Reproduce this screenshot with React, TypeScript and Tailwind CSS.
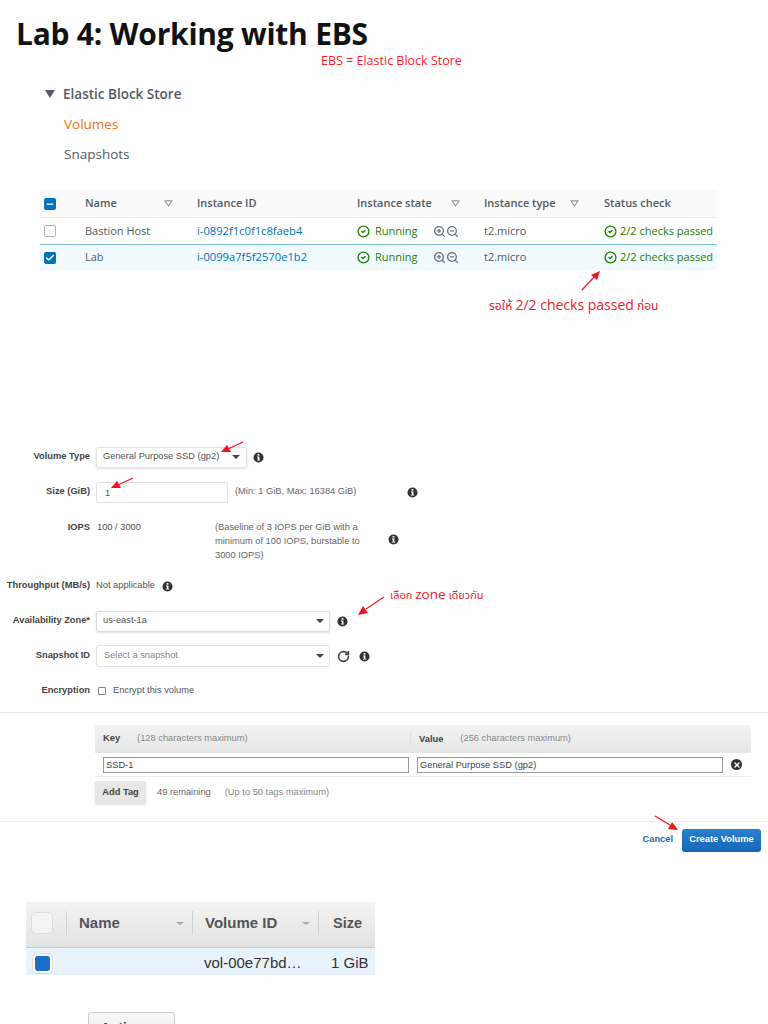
import { CircleCheck, RotateCw, ZoomIn, ZoomOut, Check, Minus, X } from "lucide-react";

function InfoIcon({ className }: { className: string }) {
    return (
        <svg viewBox="0 0 12 12" className={className}>
            <circle cx="6" cy="6" r="5.5" fill="#333" />
            <rect x="5" y="2.3" width="2" height="1.7" fill="#fff" />
            <path d="M4.4 5h2.6v3.4h.8v1H4.4v-1h.8V6h-.8z" fill="#fff" />
        </svg>
    );
}

function Caret() {
    return <span className="w-0 h-0 border-x-[4px] border-x-transparent border-t-[4px] border-t-[#444]" />;
}

function SortMark() {
    return (
        <svg viewBox="0 0 10 8" className="w-[9px] h-[7px]">
            <path d="M1 1h8L5 7z" fill="none" stroke="#8d99a3" strokeWidth="1.2" />
        </svg>
    );
}

function FormRow({ label, className, children }: { label: string; className: string; children: React.ReactNode }) {
    return (
        <div className={`flex items-center ${className}`}>
            <span className="w-[90px] text-right font-bold text-[#444] shrink-0 whitespace-nowrap">{label}</span>
            <div className="ml-[6px] flex items-center">{children}</div>
        </div>
    );
}

const instances = [
    { name: "Bastion Host", id: "i-0892f1c0f1c8faeb4", selected: false },
    { name: "Lab", id: "i-0099a7f5f2570e1b2", selected: true },
];

const thai = "font-['Noto_Sans','Noto_Sans_Thai','Liberation_Sans',sans-serif]";

export default function App() {
    return (
        <div className="relative h-[1024px] w-[768px] overflow-hidden bg-white font-['Liberation_Sans',sans-serif]">
            {/* Title slide part */}
            <h1 className="pt-[12px] pl-[16px] h-[52px] text-[30px] leading-[44px] font-bold text-[#111] font-['Open_Sans',sans-serif] tracking-[-0.25px] whitespace-nowrap">
                Lab 4: Working with EBS
            </h1>
            <p className="pl-[321px] h-[20px] text-[12.5px] leading-[18px] text-[#ff1a2a] font-['Open_Sans',sans-serif]">
                EBS = Elastic Block Store
            </p>

            <div className="pl-[45px] pt-[12px] h-[118px] font-['Open_Sans',sans-serif] text-[13.5px] text-[#545b64]">
                <div className="flex items-center h-[20px] font-semibold">
                    <span className="w-0 h-0 mr-[8px] border-x-[5px] border-x-transparent border-t-[8px] border-t-[#545b64]" />
                    Elastic Block Store
                </div>
                <div className="mt-[10px] pl-[19px] h-[20px] text-[#ec7211]">Volumes</div>
                <div className="mt-[10px] pl-[19px] h-[20px]">Snapshots</div>
            </div>

            {/* Instances table */}
            <div className="ml-[40px] w-[677px] text-[11px] text-[#545b64] font-['Open_Sans',sans-serif]">
                <div className="flex items-center h-[28px] bg-[#fafafa] border-b border-[#eaeded] font-semibold">
                    <span className="ml-[4px] w-[12px] h-[12px] rounded-[2px] bg-[#0073bb] flex items-center justify-center">
                        <Minus className="w-[10px] h-[10px] text-white" strokeWidth={3} />
                    </span>
                    <span className="ml-[29px] w-[79px]">Name</span>
                    <SortMark />
                    <span className="ml-[24px] w-[160px]">Instance ID</span>
                    <span className="w-[94px]">Instance state</span>
                    <SortMark />
                    <span className="ml-[24px] w-[86px]">Instance type</span>
                    <SortMark />
                    <span className="ml-[25px]">Status check</span>
                </div>
                {instances.map((row) => (
                    <div
                        key={row.id}
                        className={`flex items-center h-[26px] ${row.selected ? "bg-[#f1faff] border-t border-[#7cc4d8]" : "bg-white"}`}
                    >
                        {row.selected ? (
                            <span className="ml-[4px] w-[12px] h-[12px] rounded-[2px] bg-[#0073bb] flex items-center justify-center">
                                <Check className="w-[10px] h-[10px] text-white" strokeWidth={3.5} />
                            </span>
                        ) : (
                            <span className="ml-[4px] w-[12px] h-[12px] rounded-[2px] bg-white border border-[#aab7b8]" />
                        )}
                        <span className="ml-[29px] w-[112px]">{row.name}</span>
                        <span className="w-[160px] text-[#0073bb] text-[11.2px]">{row.id}</span>
                        <CircleCheck className="w-[13px] h-[13px] text-[#1d8102]" strokeWidth={2.4} />
                        <span className="ml-[5px] w-[58px] text-[#1d8102]">Running</span>
                        <ZoomIn className="w-[13px] h-[13px] text-[#687078]" strokeWidth={2.4} />
                        <ZoomOut className="w-[13px] h-[13px] text-[#687078]" strokeWidth={2.4} />
                        <span className="ml-[25px] w-[120px]">t2.micro</span>
                        <CircleCheck className="w-[13px] h-[13px] text-[#1d8102]" strokeWidth={2.4} />
                        <span className="ml-[3px] text-[#1d8102] whitespace-nowrap">2/2 checks passed</span>
                    </div>
                ))}
            </div>

            <p className={`mt-[25px] pl-[489px] h-[20px] text-[#f0202c] text-[12px] leading-[20px] whitespace-nowrap ${thai}`}>
                รอให้ <span className="text-[14px] font-['Open_Sans',sans-serif]">2/2 checks passed</span> ก่อน
            </p>

            {/* Create volume form */}
            <div className="mt-[131px] h-[266px] text-[9.3px] text-[#555]">
                <FormRow label="Volume Type" className="h-[22px]">
                    <div className="flex items-center justify-between w-[151px] h-[21px] pl-[6px] pr-[6px] border border-[#e3e3e3] rounded-[2px] shadow-sm text-[#555]">
                        General Purpose SSD (gp2)
                        <Caret />
                    </div>
                    <InfoIcon className="ml-[6px] w-[11px] h-[11px]" />
                </FormRow>
                <FormRow label="Size (GiB)" className="mt-[13px] h-[22px]">
                    <div className="w-[132px] h-[21px] pl-[8px] leading-[21px] border border-[#e3e3e3] rounded-[2px]">1</div>
                    <span className="ml-[7px] w-[170px] text-[#666]">(Min: 1 GiB, Max: 16384 GiB)</span>
                    <InfoIcon className="ml-[2px] w-[11px] h-[11px]" />
                </FormRow>
                <div className="mt-[17px] flex items-start h-[45px]">
                    <span className="w-[90px] text-right font-bold text-[#444] leading-[14px]">IOPS</span>
                    <span className="ml-[7px] w-[118px] leading-[14px]">100 / 3000</span>
                    <span className="w-[159px] leading-[14px] text-[#666]">
                        (Baseline of 3 IOPS per GiB with a minimum of 100 IOPS, burstable to 3000 IOPS)
                    </span>
                    <InfoIcon className="ml-[14px] mt-[14px] w-[11px] h-[11px]" />
                </div>
                <FormRow label="Throughput (MB/s)" className="mt-[14px] h-[14px]">
                    <span>Not applicable</span>
                    <InfoIcon className="ml-[7px] w-[11px] h-[11px]" />
                </FormRow>
                <FormRow label="Availability Zone*" className="mt-[17px] h-[22px]">
                    <div className="flex items-center justify-between w-[234px] h-[21px] pl-[6px] pr-[5px] border border-[#ddd] rounded-[2px] shadow-sm">
                        us-east-1a
                        <Caret />
                    </div>
                    <InfoIcon className="ml-[7px] w-[11px] h-[11px]" />
                </FormRow>
                <FormRow label="Snapshot ID" className="mt-[13px] h-[22px]">
                    <div className="flex items-center justify-between w-[234px] h-[22px] pl-[7px] pr-[5px] border border-[#e3e3e3] rounded-[2px] text-[#888]">
                        Select a snapshot
                        <Caret />
                    </div>
                    <RotateCw className="ml-[7px] w-[13px] h-[13px] text-[#444]" strokeWidth={3} />
                    <InfoIcon className="ml-[9px] w-[11px] h-[11px]" />
                </FormRow>
                <FormRow label="Encryption" className="mt-[17px] h-[14px]">
                    <span className="ml-[2px] w-[8px] h-[8px] border border-[#888] rounded-[1px]" />
                    <span className="ml-[7px]">Encrypt this volume</span>
                </FormRow>
            </div>

            <div className="border-t border-[#e6e6e6]" />

            {/* Tags */}
            <div className="ml-[95px] mt-[12px] w-[656px] h-[96px] text-[9.3px] text-[#888]">
                <div className="flex items-center h-[28px] bg-gradient-to-b from-[#f2f2f2] to-[#e6e6e6]">
                    <span className="ml-[8px] font-bold text-[#444]">Key</span>
                    <span className="ml-[17px] w-[273px]">(128 characters maximum)</span>
                    <span className="border-l border-[#ddd] pl-[8px] font-bold text-[#444] leading-[14px]">Value</span>
                    <span className="ml-[17px]">(256 characters maximum)</span>
                </div>
                <div className="flex items-center h-[24px] border-b border-[#eee] text-[#444]">
                    <div className="ml-[8px] w-[306px] h-[16px] pl-[2px] leading-[14px] border border-[#999]">SSD-1</div>
                    <div className="ml-[8px] w-[306px] h-[16px] pl-[2px] leading-[14px] border border-[#999]">General Purpose SSD (gp2)</div>
                    <span className="ml-[8px] w-[11px] h-[11px] rounded-full bg-[#333] flex items-center justify-center">
                        <X className="w-[8px] h-[8px] text-white" strokeWidth={4} />
                    </span>
                </div>
                <div className="mt-[4px] flex items-center">
                    <button className="w-[51px] h-[23px] rounded-[2px] bg-[#e7e7e7] font-bold text-[#444] shadow-sm">Add Tag</button>
                    <span className="ml-[11px] text-[#666]">49 remaining</span>
                    <span className="ml-[14px]">(Up to 50 tags maximum)</span>
                </div>
            </div>

            <div className="border-t border-[#eee]" />

            <div className="mt-[7px] pr-[7px] flex items-center justify-end h-[22px] text-[9.3px]">
                <span className="text-[#1a6dbd] font-bold">Cancel</span>
                <button className="ml-[9px] w-[79px] h-[23px] rounded-[3px] bg-gradient-to-b from-[#2a80d0] to-[#1566b7] text-white font-bold">
                    Create Volume
                </button>
            </div>

            {/* Volumes table */}
            <div className="ml-[26px] mt-[51px] w-[349px] text-[#333]">
                <div className="flex items-center h-[46px] pb-[3px] bg-gradient-to-b from-[#f3f3f3] to-[#e3e3e3] border-b border-[#c8c8c8] text-[15px] font-bold text-[#555]">
                    <span className="ml-[5px] w-[22px] h-[22px] rounded-[4px] bg-[#f3f3f3] border border-[#ddd]" />
                    <span className="ml-[13px] border-l border-[#d0d0d0] pl-[12px] w-[110px] leading-[24px]">Name</span>
                    <span className="w-0 h-0 border-x-[4px] border-x-transparent border-t-[3px] border-t-[#aaa]" />
                    <span className="ml-[8px] border-l border-[#d0d0d0] pl-[12px] w-[110px] leading-[24px] whitespace-nowrap">Volume ID</span>
                    <span className="w-0 h-0 border-x-[4px] border-x-transparent border-t-[3px] border-t-[#aaa]" />
                    <span className="ml-[8px] border-l border-[#d0d0d0] pl-[14px] leading-[24px] text-[14.5px]">Size</span>
                </div>
                <div className="flex items-center h-[27px] bg-[#e9f3fd] text-[15px]">
                    <span className="ml-[6px] mt-[4px] w-[21px] h-[21px] rounded-[4px] bg-[#fafafa] border border-[#ddd] flex items-center justify-center">
                        <span className="w-[15px] h-[15px] rounded-[3px] bg-[#1a6fc9]" />
                    </span>
                    <span className="ml-[151px] mt-[3px] w-[127px]">vol-00e77bd…</span>
                    <span className="mt-[3px] whitespace-nowrap">1 GiB</span>
                </div>
            </div>

            <button className="block ml-[88px] mt-[37px] w-[87px] h-[30px] pt-[2px] rounded-t-[3px] border border-[#ccc] bg-gradient-to-b from-[#f8f8f8] to-[#ececec] text-[#444] text-[14px] font-bold leading-[18px]">
                Actions ▾
            </button>

            {/* Red annotations over the pictures */}
            <svg viewBox="0 0 768 1024" className="absolute inset-0 w-[768px] h-[1024px] pointer-events-none">
                <g stroke="#f0141e" strokeWidth="1.2">
                    <line x1="582" y1="290" x2="596" y2="275" />
                    <line x1="243" y1="442" x2="228" y2="449" />
                    <line x1="133" y1="478" x2="118" y2="485" />
                    <line x1="384" y1="597" x2="366" y2="609" />
                    <line x1="655" y1="816" x2="670" y2="825" />
                </g>
                <g fill="#f0141e">
                    <path d="M600 271l-3 9-6-5z" />
                    <path d="M221 452l6-7 4 7z" />
                    <path d="M111 488l6-7 4 7z" />
                    <path d="M358 615l5-9 5 7z" />
                    <path d="M678 830l-10-1 4-7z" />
                </g>
            </svg>
            <p className={`absolute left-[390px] top-[584px] text-[#f0202c] text-[11px] leading-[20px] whitespace-nowrap ${thai}`}>
                เลือก <span className="text-[13.5px] font-['Open_Sans',sans-serif]">zone</span> เดียวกัน
            </p>
        </div>
    );
}
